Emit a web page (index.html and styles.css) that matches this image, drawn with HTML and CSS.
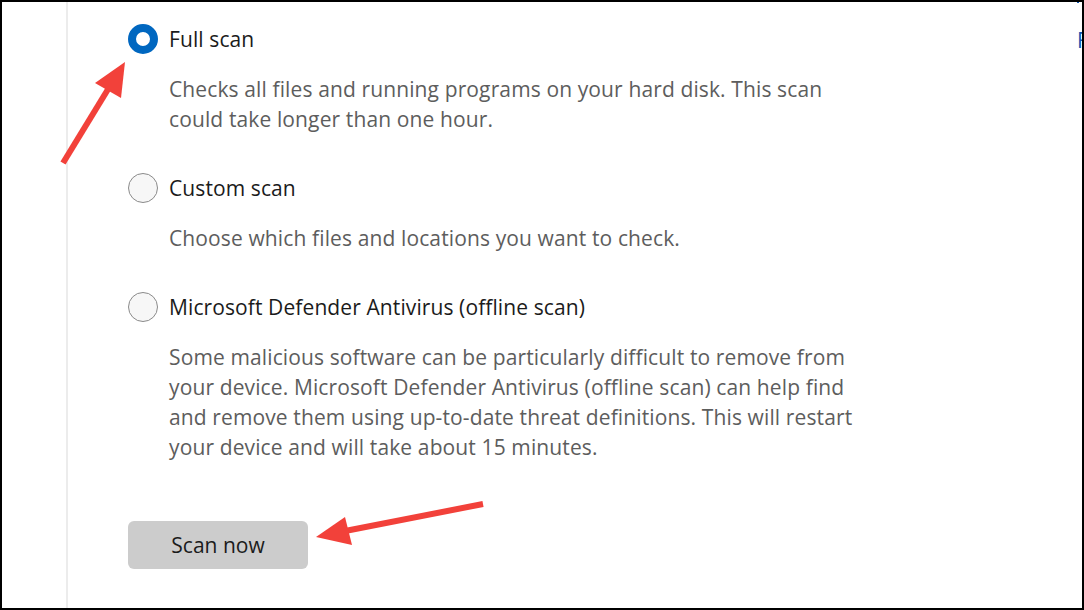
FILE: index.html
```html
<!DOCTYPE html>
<html lang="en">
<head>
<meta charset="utf-8">
<title>Scan options</title>
<link rel="stylesheet" href="styles.css">
</head>
<body>
<div class="frame">
  <div class="gutter"></div>
  <div class="divider"></div>
  <main class="content">
    <section class="option">
      <label class="radio-row">
        <span class="radio selected"></span>
        <span class="label">Full scan</span>
      </label>
      <p class="desc">Checks all files and running programs on your hard disk. This scan<br>could take longer than one hour.</p>
    </section>
    <section class="option">
      <label class="radio-row">
        <span class="radio"></span>
        <span class="label">Custom scan</span>
      </label>
      <p class="desc">Choose which files and locations you want to check.</p>
    </section>
    <section class="option">
      <label class="radio-row">
        <span class="radio"></span>
        <span class="label">Microsoft Defender Antivirus (offline scan)</span>
      </label>
      <p class="desc">Some malicious software can be particularly difficult to remove from<br>your device. Microsoft Defender Antivirus (offline scan) can help find<br>and remove them using up-to-date threat definitions. This will restart<br>your device and will take about 15 minutes.</p>
    </section>
    <button class="scan-btn" type="button">Scan now</button>
  </main>
  <aside class="side">
    <span class="side-mark"></span>
    <span class="side-link">F</span>
  </aside>
  <svg class="arrows" width="1084" height="610" viewBox="0 0 1084 610" aria-hidden="true">
    <line x1="63" y1="163" x2="110" y2="86" stroke="#f2413a" stroke-width="6"/>
    <polygon points="125,62 95,83 121,98" fill="#f2413a"/>
    <line x1="483" y1="504" x2="340" y2="532" stroke="#f2413a" stroke-width="6"/>
    <polygon points="316,537 345,517 352,545" fill="#f2413a"/>
  </svg>
</div>
</body>
</html>
```

FILE: styles.css
```css
* { box-sizing: border-box; }
html, body { margin: 0; padding: 0; background: #fff; }
body {
  font-family: "Open Sans", "Noto Sans", "Liberation Sans", sans-serif;
  width: 1084px;
  height: 610px;
  overflow: hidden;
}
.frame {
  position: relative;
  width: 1084px;
  height: 610px;
  border: 2px solid #000;
  display: flex;
  background: #fff;
}
.gutter { width: 64px; flex: none; }
.divider { width: 2px; flex: none; background: #ececec; }
.content {
  flex: 1;
  padding: 22px 0 0 60px;
  display: flex;
  flex-direction: column;
  align-items: flex-start;
}
.option {
  display: flex;
  flex-direction: column;
  gap: 20px;
  margin-bottom: 39px;
}
.option:last-of-type { margin-bottom: 59px; }
.radio-row {
  display: flex;
  align-items: center;
  gap: 11px;
  height: 30px;
}
.radio {
  width: 30px;
  height: 30px;
  border-radius: 50%;
  border: 1.5px solid #8a8a8a;
  background: #f7f7f7;
  flex: none;
}
.radio.selected {
  border: 8px solid #0067c0;
  background: #fff;
}
.label {
  font-size: 21px;
  line-height: 30px;
  color: #1b1b1b;
  white-space: nowrap;
  letter-spacing: 0.1px;
}
.desc {
  margin: 0 0 0 41px;
  font-size: 21px;
  line-height: 30px;
  color: #5d5d5d;
  white-space: nowrap;
  letter-spacing: 0.12px;
}
.scan-btn {
  width: 180px;
  height: 48px;
  border: none;
  border-radius: 6px;
  background: #cccccc;
  color: #1b1b1b;
  font-family: inherit;
  font-size: 21px;
  padding: 0;
}
.side {
  width: 5px;
  flex: none;
  overflow: hidden;
  position: relative;
}
.side-link {
  display: block;
  margin-top: 23px;
  font-size: 21px;
  line-height: 30px;
  color: #0f57b0;
}
.side-mark {
  position: absolute;
  left: 0;
  top: -2px;
  width: 2px;
  height: 3px;
  background: #0f57b0;
}
.arrows {
  position: absolute;
  left: -2px;
  top: -2px;
  pointer-events: none;
}
```
